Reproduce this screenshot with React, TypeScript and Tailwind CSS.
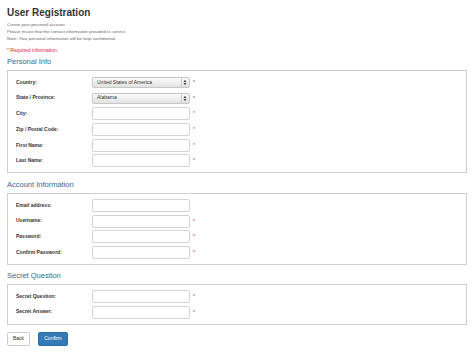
import type React from "react"

interface Field {
  label: string
  kind: "select" | "input"
  value?: string
  required: boolean
}

const personal: Field[] = [
  { label: "Country:", kind: "select", value: "United States of America", required: true },
  { label: "State / Province:", kind: "select", value: "Alabama", required: true },
  { label: "City:", kind: "input", required: true },
  { label: "Zip / Postal Code:", kind: "input", required: true },
  { label: "First Name:", kind: "input", required: true },
  { label: "Last Name:", kind: "input", required: true },
]

const account: Field[] = [
  { label: "Email address:", kind: "input", required: false },
  { label: "Username:", kind: "input", required: true },
  { label: "Password:", kind: "input", required: true },
  { label: "Confirm Password:", kind: "input", required: true },
]

const secret: Field[] = [
  { label: "Secret Question:", kind: "input", required: true },
  { label: "Secret Answer:", kind: "input", required: true },
]

function SelectBox({ value }: { value?: string }) {
  return (
    <div className="flex h-[11px] w-[98px] items-center justify-between rounded-[2px] border border-[#c8c8c8] bg-gradient-to-b from-[#fbfbfb] to-[#e2e2e2] pl-[4px] pr-[2px] text-[5px] text-[#333]">
      <span>{value}</span>
      <div className="flex h-full items-center border-l border-[#d0d0d0] pl-[1px]">
        <svg width="4" height="7" viewBox="0 0 4 7">
          <path d="M0.5 3 L2 1 L3.5 3 Z" fill="#333" />
          <path d="M0.5 4 L2 6 L3.5 4 Z" fill="#333" />
        </svg>
      </div>
    </div>
  )
}

function Row({ field }: { field: Field }) {
  return (
    <div className="flex h-[13px] items-center">
      <div className="w-[76px] text-[5px] font-bold text-[#333]">{field.label}</div>
      {field.kind === "select" ? (
        <SelectBox value={field.value} />
      ) : (
        <input
          type="text"
          aria-label={field.label}
          className="h-[13px] w-[98px] rounded-[2px] border border-[#d4d4d4] bg-white px-[3px] text-[5px] outline-none"
        />
      )}
      {field.required && <span className="ml-[3px] text-[5px] leading-none text-[#e0234a]">*</span>}
    </div>
  )
}

function Section({ title, fields, className }: { title: string; fields: Field[]; className?: string }) {
  return (
    <section className={className}>
      <h2 className="mb-[3px] text-[7.5px] leading-[11px] font-medium text-[#2d6c94]">{title}</h2>
      <div className="flex flex-col gap-[2.7px] border border-[#cfcfcf] py-[5px] pl-[8px]">
        {fields.map((f) => (
          <Row key={f.label} field={f} />
        ))}
      </div>
    </section>
  )
}

export default function App() {
  return (
    <div className="min-h-[353px] w-[474px] bg-white px-[7px] pt-[4px] font-['Liberation_Sans',Arial,sans-serif]">
      <h1 className="text-[10px] leading-[17px] font-semibold text-[#333]">User Registration</h1>
      <div className="text-[4.4px] leading-[7px] text-[#666]">
        <p>Create your personal account</p>
        <p>Please insure that the contact information provided is correct.</p>
        <p>Note: Your personal information will be kept confidential.</p>
      </div>
      <p className="mt-[5px] text-[5px] leading-[7px] text-[#e0234a]">* Required information.</p>

      <Section title="Personal Info" fields={personal} className="mt-[2px]" />
      <Section title="Account Information" fields={account} className="mt-[5.5px]" />
      <Section title="Secret Question" fields={secret} className="mt-[5px]" />

      <div className="mt-[7px] flex gap-[8px]">
        <button className="h-[14px] w-[23px] rounded-[2px] border border-[#ccc] bg-white text-[5px] text-[#333]">
          Back
        </button>
        <button className="h-[14px] w-[30px] rounded-[2px] border border-[#2e6da4] bg-[#337ab7] text-[5px] text-white">
          Confirm
        </button>
      </div>
    </div>
  )
}
